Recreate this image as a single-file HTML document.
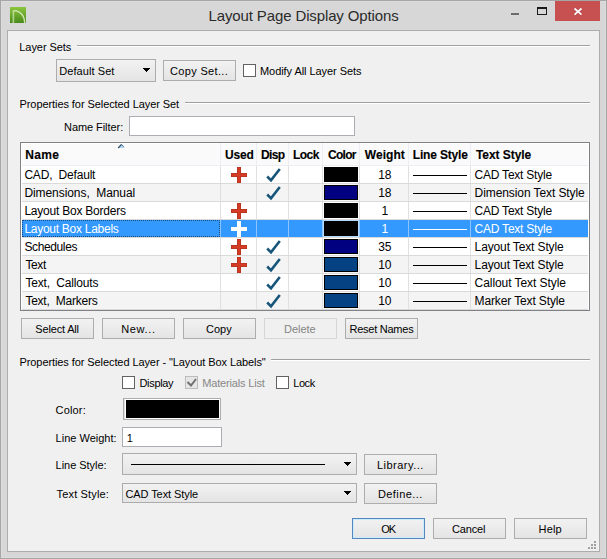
<!DOCTYPE html>
<html><head><meta charset="utf-8"><style>
*{margin:0;padding:0;box-sizing:border-box}
html,body{width:607px;height:559px;overflow:hidden;background:#d7d7d7}
body{position:relative;font-family:"Liberation Sans",sans-serif;font-size:11px;color:#000}
.a{position:absolute}
.t{position:absolute;white-space:pre;line-height:20px;font-size:11px}
.btn{position:absolute;border:1px solid #adadad;background:linear-gradient(#f2f2f2,#e4e4e4);height:21px;width:73px}
.dd{position:absolute;border:1px solid #acacac;background:linear-gradient(#f2f2f2,#e4e4e4)}
.cb{position:absolute;width:13px;height:13px;border:1px solid #626262;background:#fff}
.etch{position:absolute;height:2px;border-top:1px solid #a0a0a0;border-bottom:1px solid #fff}
</style></head><body>
<div class="a" style="left:0;top:0;width:607px;height:559px;border:1px solid #a6a6a6"></div>
<div class="a" style="left:1px;top:1px;width:605px;height:557px;border:1px solid #dcdcdc"></div>
<svg class="a" style="left:10px;top:7px" width="16" height="16" viewBox="0 0 16 16">
<defs><linearGradient id="g" x1="0" y1="0" x2="0" y2="1"><stop offset="0" stop-color="#8cc63e"/><stop offset="1" stop-color="#4a8a1b"/></linearGradient></defs>
<rect width="16" height="16" fill="url(#g)"/>
<path d="M3.4 16V3.8" fill="none" stroke="#d8ecc0" stroke-opacity=".65" stroke-width="1.7"/>
<path d="M3.4 3.6C9.5 3.6 14.6 8 14.7 16" fill="none" stroke="#e4f2cc" stroke-opacity=".85" stroke-width="1.4"/></svg>
<div class="t" style="left:208.50px;top:4px;font-size:15px;line-height:24px;letter-spacing:-0.123px;color:#2b2b2b">Layout Page Display Options</div>
<div class="a" style="left:511px;top:13px;width:8px;height:2px;background:#6b6b6b"></div>
<div class="a" style="left:537px;top:7px;width:10px;height:8px;border:1px solid #1a1a1a;border-top-width:2px"></div>
<div class="a" style="left:555px;top:1px;width:45px;height:20px;background:#c75050"></div>
<svg class="a" style="left:573px;top:7px" width="10" height="9" viewBox="0 0 10 9"><path d="M1.5 1.5L8.5 7.7M8.5 1.5L1.5 7.7" stroke="#7a2020" stroke-opacity=".3" stroke-width="2.8"/><path d="M1.5 1.5L8.5 7.7M8.5 1.5L1.5 7.7" stroke="#fff" stroke-width="1.75"/></svg>
<div class="a" style="left:7px;top:30px;width:593px;height:522px;border:1px solid #adadad;background:#f0f0f0"></div>
<div class="t" style="left:19.30px;top:37px;letter-spacing:-0.067px;">Layer Sets</div>
<div class="etch" style="left:77px;top:45px;width:513px"></div>
<div class="dd" style="left:56px;top:59px;width:100px;height:23px"></div>
<div class="t" style="left:59.30px;top:61px;letter-spacing:0.070px;">Default Set</div>
<svg class="a" style="left:143px;top:68px" width="7" height="4" shape-rendering="crispEdges"><path d="M0 0h7v1h-1v1h-1v1h-1v1h-1v-1h-1v-1h-1v-1h-1z" fill="#000"/></svg>
<div class="btn" style="left:163px;top:60px"></div>
<div class="t" style="left:170.00px;top:61px;letter-spacing:0.330px;">Copy Set...</div>
<div class="cb" style="left:243px;top:64px"></div>
<div class="t" style="left:260.00px;top:61px;letter-spacing:-0.060px;">Modify All Layer Sets</div>
<div class="t" style="left:19.50px;top:94px;letter-spacing:-0.075px;">Properties for Selected Layer Set</div>
<div class="etch" style="left:185px;top:102px;width:405px"></div>
<div class="t" style="left:64.00px;top:117px;letter-spacing:-0.064px;">Name Filter:</div>
<div class="a" style="left:129px;top:116px;width:226px;height:20px;border:1px solid #abadb3;background:#fff"></div>
<div class="a" style="left:20px;top:142px;width:570px;height:169px;border:1px solid #7f8184;background:#fff"></div>
<div class="a" style="left:22px;top:144px;width:566px;height:21px;background:#fafafa"></div>
<div class="a" style="left:22px;top:165px;width:566px;height:1px;background:#eceef4"></div>
<div class="a" style="left:220px;top:143px;width:1px;height:22px;background:#eceef4"></div>
<div class="a" style="left:256px;top:143px;width:1px;height:22px;background:#eceef4"></div>
<div class="a" style="left:288px;top:143px;width:1px;height:22px;background:#eceef4"></div>
<div class="a" style="left:322px;top:143px;width:1px;height:22px;background:#eceef4"></div>
<div class="a" style="left:359px;top:143px;width:1px;height:22px;background:#eceef4"></div>
<div class="a" style="left:408px;top:143px;width:1px;height:22px;background:#eceef4"></div>
<div class="a" style="left:470px;top:143px;width:1px;height:22px;background:#eceef4"></div>
<div class="t" style="left:25.30px;top:145px;font-size:12px;font-weight:bold;-webkit-text-stroke:0.12px #000;letter-spacing:0.333px;">Name</div>
<div class="t" style="left:225.10px;top:145px;font-size:12px;font-weight:bold;-webkit-text-stroke:0.12px #000;letter-spacing:-0.233px;">Used</div>
<div class="t" style="left:261.00px;top:145px;font-size:12px;font-weight:bold;-webkit-text-stroke:0.12px #000;letter-spacing:-0.633px;">Disp</div>
<div class="t" style="left:293.00px;top:145px;font-size:12px;font-weight:bold;-webkit-text-stroke:0.12px #000;letter-spacing:-0.567px;">Lock</div>
<div class="t" style="left:327.90px;top:145px;font-size:12px;font-weight:bold;-webkit-text-stroke:0.12px #000;letter-spacing:-0.675px;">Color</div>
<div class="t" style="left:364.80px;top:145px;font-size:12px;font-weight:bold;-webkit-text-stroke:0.12px #000;letter-spacing:0.060px;">Weight</div>
<div class="t" style="left:412.80px;top:145px;font-size:12px;font-weight:bold;-webkit-text-stroke:0.12px #000;letter-spacing:-0.178px;">Line Style</div>
<div class="t" style="left:475.90px;top:145px;font-size:12px;font-weight:bold;-webkit-text-stroke:0.12px #000;letter-spacing:-0.044px;">Text Style</div>
<svg class="a" style="left:117px;top:143px" width="9" height="6" viewBox="0 0 9 6"><path d="M1.2 5L4.5 1.3L7.8 5Z" fill="#b4d6ee"/><path d="M1.2 5L4.5 1.3" fill="none" stroke="#2c4a64" stroke-width="1.2"/><path d="M4.5 1.3L6.8 4" fill="none" stroke="#5c7c96" stroke-width="1"/></svg>
<div class="a" style="left:22px;top:166px;width:566px;height:17px;background:#ffffff"></div>
<div class="a" style="left:22px;top:183px;width:566px;height:1px;background:#dadada"></div>
<div class="a" style="left:220px;top:166px;width:1px;height:17px;background:#e0e0e0"></div>
<div class="a" style="left:256px;top:166px;width:1px;height:17px;background:#e0e0e0"></div>
<div class="a" style="left:288px;top:166px;width:1px;height:17px;background:#e0e0e0"></div>
<div class="a" style="left:322px;top:166px;width:1px;height:17px;background:#e0e0e0"></div>
<div class="a" style="left:359px;top:166px;width:1px;height:17px;background:#e0e0e0"></div>
<div class="a" style="left:408px;top:166px;width:1px;height:17px;background:#e0e0e0"></div>
<div class="a" style="left:470px;top:166px;width:1px;height:17px;background:#e0e0e0"></div>
<div class="t" style="left:24.40px;top:165px;font-size:12px;letter-spacing:-0.192px;color:#000000">CAD,  Default</div>
<svg class="a" style="left:231px;top:167px" width="16" height="16" shape-rendering="crispEdges"><path d="M6 0h4v6h6v4h-6v6h-4v-6h-6v-4h6z" fill="#d43c26"/><path d="M6.5 0.5h3v6h6v3h-6v6h-3v-6h-6v-3h6z" fill="none" stroke="#a8301c" stroke-opacity=".55" stroke-width="1"/></svg>
<svg class="a" style="left:265px;top:167px" width="17" height="16" viewBox="0 0 17 16"><path d="M2.2 9.5L6 13.3L14.8 2" fill="none" stroke="#18557a" stroke-width="2.6"/></svg>
<div class="a" style="left:324px;top:167px;width:34px;height:15px;background:#000000;border:1px solid #000"></div>
<div class="t" style="left:378.30px;top:165px;font-size:12px;letter-spacing:-0.100px;color:#000000">18</div>
<div class="a" style="left:413px;top:175px;width:54px;height:1px;background:#000000"></div>
<div class="t" style="left:474.60px;top:165px;font-size:12px;letter-spacing:-0.231px;color:#000000">CAD Text Style</div>
<div class="a" style="left:22px;top:184px;width:566px;height:17px;background:#f4f4f4"></div>
<div class="a" style="left:22px;top:201px;width:566px;height:1px;background:#dadada"></div>
<div class="a" style="left:220px;top:184px;width:1px;height:17px;background:#e0e0e0"></div>
<div class="a" style="left:256px;top:184px;width:1px;height:17px;background:#e0e0e0"></div>
<div class="a" style="left:288px;top:184px;width:1px;height:17px;background:#e0e0e0"></div>
<div class="a" style="left:322px;top:184px;width:1px;height:17px;background:#e0e0e0"></div>
<div class="a" style="left:359px;top:184px;width:1px;height:17px;background:#e0e0e0"></div>
<div class="a" style="left:408px;top:184px;width:1px;height:17px;background:#e0e0e0"></div>
<div class="a" style="left:470px;top:184px;width:1px;height:17px;background:#e0e0e0"></div>
<div class="t" style="left:24.40px;top:183px;font-size:12px;letter-spacing:-0.067px;color:#000000">Dimensions,  Manual</div>
<svg class="a" style="left:265px;top:185px" width="17" height="16" viewBox="0 0 17 16"><path d="M2.2 9.5L6 13.3L14.8 2" fill="none" stroke="#18557a" stroke-width="2.6"/></svg>
<div class="a" style="left:324px;top:185px;width:34px;height:15px;background:#000080;border:1px solid #000"></div>
<div class="t" style="left:378.30px;top:183px;font-size:12px;letter-spacing:-0.100px;color:#000000">18</div>
<div class="a" style="left:413px;top:193px;width:54px;height:1px;background:#000000"></div>
<div class="t" style="left:474.60px;top:183px;font-size:12px;letter-spacing:-0.089px;color:#000000">Dimension Text Style</div>
<div class="a" style="left:22px;top:202px;width:566px;height:17px;background:#ffffff"></div>
<div class="a" style="left:22px;top:219px;width:566px;height:1px;background:#dadada"></div>
<div class="a" style="left:220px;top:202px;width:1px;height:17px;background:#e0e0e0"></div>
<div class="a" style="left:256px;top:202px;width:1px;height:17px;background:#e0e0e0"></div>
<div class="a" style="left:288px;top:202px;width:1px;height:17px;background:#e0e0e0"></div>
<div class="a" style="left:322px;top:202px;width:1px;height:17px;background:#e0e0e0"></div>
<div class="a" style="left:359px;top:202px;width:1px;height:17px;background:#e0e0e0"></div>
<div class="a" style="left:408px;top:202px;width:1px;height:17px;background:#e0e0e0"></div>
<div class="a" style="left:470px;top:202px;width:1px;height:17px;background:#e0e0e0"></div>
<div class="t" style="left:24.40px;top:201px;font-size:12px;letter-spacing:-0.224px;color:#000000">Layout Box Borders</div>
<svg class="a" style="left:231px;top:203px" width="16" height="16" shape-rendering="crispEdges"><path d="M6 0h4v6h6v4h-6v6h-4v-6h-6v-4h6z" fill="#d43c26"/><path d="M6.5 0.5h3v6h6v3h-6v6h-3v-6h-6v-3h6z" fill="none" stroke="#a8301c" stroke-opacity=".55" stroke-width="1"/></svg>
<div class="a" style="left:324px;top:203px;width:34px;height:15px;background:#000000;border:1px solid #000"></div>
<div class="t" style="left:381.50px;top:201px;font-size:12px;color:#000000">1</div>
<div class="a" style="left:413px;top:211px;width:54px;height:1px;background:#000000"></div>
<div class="t" style="left:474.60px;top:201px;font-size:12px;letter-spacing:-0.231px;color:#000000">CAD Text Style</div>
<div class="a" style="left:22px;top:220px;width:566px;height:17px;background:#3399ff"></div>
<div class="a" style="left:22px;top:237px;width:566px;height:1px;background:#dadada"></div>
<div class="a" style="left:220px;top:220px;width:1px;height:17px;background:#8cc4ff"></div>
<div class="a" style="left:256px;top:220px;width:1px;height:17px;background:#8cc4ff"></div>
<div class="a" style="left:288px;top:220px;width:1px;height:17px;background:#8cc4ff"></div>
<div class="a" style="left:322px;top:220px;width:1px;height:17px;background:#8cc4ff"></div>
<div class="a" style="left:359px;top:220px;width:1px;height:17px;background:#8cc4ff"></div>
<div class="a" style="left:408px;top:220px;width:1px;height:17px;background:#8cc4ff"></div>
<div class="a" style="left:470px;top:220px;width:1px;height:17px;background:#8cc4ff"></div>
<div class="t" style="left:24.40px;top:219px;font-size:12px;letter-spacing:-0.269px;color:#ffffff">Layout Box Labels</div>
<div class="a" style="left:22px;top:220px;width:198px;height:17px;border:1px dotted rgba(0,0,0,.5)"></div>
<div class="a" style="left:237px;top:221px;width:4px;height:16px;background:#fff"></div>
<div class="a" style="left:231px;top:227px;width:16px;height:4px;background:#fff"></div>
<div class="a" style="left:323px;top:220px;width:36px;height:17px;background:#b4dbff"></div>
<div class="a" style="left:324px;top:221px;width:34px;height:15px;background:#000000;border:1px solid #000"></div>
<div class="t" style="left:381.50px;top:219px;font-size:12px;color:#ffffff">1</div>
<div class="a" style="left:413px;top:229px;width:54px;height:1px;background:#ffffff"></div>
<div class="t" style="left:474.60px;top:219px;font-size:12px;letter-spacing:-0.231px;color:#ffffff">CAD Text Style</div>
<div class="a" style="left:22px;top:238px;width:566px;height:17px;background:#ffffff"></div>
<div class="a" style="left:22px;top:255px;width:566px;height:1px;background:#dadada"></div>
<div class="a" style="left:220px;top:238px;width:1px;height:17px;background:#e0e0e0"></div>
<div class="a" style="left:256px;top:238px;width:1px;height:17px;background:#e0e0e0"></div>
<div class="a" style="left:288px;top:238px;width:1px;height:17px;background:#e0e0e0"></div>
<div class="a" style="left:322px;top:238px;width:1px;height:17px;background:#e0e0e0"></div>
<div class="a" style="left:359px;top:238px;width:1px;height:17px;background:#e0e0e0"></div>
<div class="a" style="left:408px;top:238px;width:1px;height:17px;background:#e0e0e0"></div>
<div class="a" style="left:470px;top:238px;width:1px;height:17px;background:#e0e0e0"></div>
<div class="t" style="left:24.40px;top:237px;font-size:12px;letter-spacing:-0.375px;color:#000000">Schedules</div>
<svg class="a" style="left:231px;top:239px" width="16" height="16" shape-rendering="crispEdges"><path d="M6 0h4v6h6v4h-6v6h-4v-6h-6v-4h6z" fill="#d43c26"/><path d="M6.5 0.5h3v6h6v3h-6v6h-3v-6h-6v-3h6z" fill="none" stroke="#a8301c" stroke-opacity=".55" stroke-width="1"/></svg>
<svg class="a" style="left:265px;top:239px" width="17" height="16" viewBox="0 0 17 16"><path d="M2.2 9.5L6 13.3L14.8 2" fill="none" stroke="#18557a" stroke-width="2.6"/></svg>
<div class="a" style="left:324px;top:239px;width:34px;height:15px;background:#000080;border:1px solid #000"></div>
<div class="t" style="left:378.30px;top:237px;font-size:12px;letter-spacing:-0.100px;color:#000000">35</div>
<div class="a" style="left:413px;top:247px;width:54px;height:1px;background:#000000"></div>
<div class="t" style="left:474.60px;top:237px;font-size:12px;letter-spacing:-0.131px;color:#000000">Layout Text Style</div>
<div class="a" style="left:22px;top:256px;width:566px;height:17px;background:#f4f4f4"></div>
<div class="a" style="left:22px;top:273px;width:566px;height:1px;background:#dadada"></div>
<div class="a" style="left:220px;top:256px;width:1px;height:17px;background:#e0e0e0"></div>
<div class="a" style="left:256px;top:256px;width:1px;height:17px;background:#e0e0e0"></div>
<div class="a" style="left:288px;top:256px;width:1px;height:17px;background:#e0e0e0"></div>
<div class="a" style="left:322px;top:256px;width:1px;height:17px;background:#e0e0e0"></div>
<div class="a" style="left:359px;top:256px;width:1px;height:17px;background:#e0e0e0"></div>
<div class="a" style="left:408px;top:256px;width:1px;height:17px;background:#e0e0e0"></div>
<div class="a" style="left:470px;top:256px;width:1px;height:17px;background:#e0e0e0"></div>
<div class="t" style="left:25.40px;top:255px;font-size:12px;letter-spacing:-0.367px;color:#000000">Text</div>
<svg class="a" style="left:231px;top:257px" width="16" height="16" shape-rendering="crispEdges"><path d="M6 0h4v6h6v4h-6v6h-4v-6h-6v-4h6z" fill="#d43c26"/><path d="M6.5 0.5h3v6h6v3h-6v6h-3v-6h-6v-3h6z" fill="none" stroke="#a8301c" stroke-opacity=".55" stroke-width="1"/></svg>
<svg class="a" style="left:265px;top:257px" width="17" height="16" viewBox="0 0 17 16"><path d="M2.2 9.5L6 13.3L14.8 2" fill="none" stroke="#18557a" stroke-width="2.6"/></svg>
<div class="a" style="left:324px;top:257px;width:34px;height:15px;background:#044283;border:1px solid #000"></div>
<div class="t" style="left:378.30px;top:255px;font-size:12px;letter-spacing:-0.100px;color:#000000">10</div>
<div class="a" style="left:413px;top:265px;width:54px;height:1px;background:#000000"></div>
<div class="t" style="left:474.60px;top:255px;font-size:12px;letter-spacing:-0.131px;color:#000000">Layout Text Style</div>
<div class="a" style="left:22px;top:274px;width:566px;height:17px;background:#ffffff"></div>
<div class="a" style="left:22px;top:291px;width:566px;height:1px;background:#dadada"></div>
<div class="a" style="left:220px;top:274px;width:1px;height:17px;background:#e0e0e0"></div>
<div class="a" style="left:256px;top:274px;width:1px;height:17px;background:#e0e0e0"></div>
<div class="a" style="left:288px;top:274px;width:1px;height:17px;background:#e0e0e0"></div>
<div class="a" style="left:322px;top:274px;width:1px;height:17px;background:#e0e0e0"></div>
<div class="a" style="left:359px;top:274px;width:1px;height:17px;background:#e0e0e0"></div>
<div class="a" style="left:408px;top:274px;width:1px;height:17px;background:#e0e0e0"></div>
<div class="a" style="left:470px;top:274px;width:1px;height:17px;background:#e0e0e0"></div>
<div class="t" style="left:25.40px;top:273px;font-size:12px;letter-spacing:-0.164px;color:#000000">Text,  Callouts</div>
<svg class="a" style="left:265px;top:275px" width="17" height="16" viewBox="0 0 17 16"><path d="M2.2 9.5L6 13.3L14.8 2" fill="none" stroke="#18557a" stroke-width="2.6"/></svg>
<div class="a" style="left:324px;top:275px;width:34px;height:15px;background:#044283;border:1px solid #000"></div>
<div class="t" style="left:378.30px;top:273px;font-size:12px;letter-spacing:-0.100px;color:#000000">10</div>
<div class="a" style="left:413px;top:283px;width:54px;height:1px;background:#000000"></div>
<div class="t" style="left:474.60px;top:273px;font-size:12px;letter-spacing:-0.065px;color:#000000">Callout Text Style</div>
<div class="a" style="left:22px;top:292px;width:566px;height:17px;background:#f4f4f4"></div>
<div class="a" style="left:22px;top:309px;width:566px;height:1px;background:#dadada"></div>
<div class="a" style="left:220px;top:292px;width:1px;height:17px;background:#e0e0e0"></div>
<div class="a" style="left:256px;top:292px;width:1px;height:17px;background:#e0e0e0"></div>
<div class="a" style="left:288px;top:292px;width:1px;height:17px;background:#e0e0e0"></div>
<div class="a" style="left:322px;top:292px;width:1px;height:17px;background:#e0e0e0"></div>
<div class="a" style="left:359px;top:292px;width:1px;height:17px;background:#e0e0e0"></div>
<div class="a" style="left:408px;top:292px;width:1px;height:17px;background:#e0e0e0"></div>
<div class="a" style="left:470px;top:292px;width:1px;height:17px;background:#e0e0e0"></div>
<div class="t" style="left:25.40px;top:291px;font-size:12px;letter-spacing:-0.238px;color:#000000">Text,  Markers</div>
<svg class="a" style="left:265px;top:293px" width="17" height="16" viewBox="0 0 17 16"><path d="M2.2 9.5L6 13.3L14.8 2" fill="none" stroke="#18557a" stroke-width="2.6"/></svg>
<div class="a" style="left:324px;top:293px;width:34px;height:15px;background:#044283;border:1px solid #000"></div>
<div class="t" style="left:378.30px;top:291px;font-size:12px;letter-spacing:-0.100px;color:#000000">10</div>
<div class="a" style="left:413px;top:301px;width:54px;height:1px;background:#000000"></div>
<div class="t" style="left:474.60px;top:291px;font-size:12px;letter-spacing:-0.131px;color:#000000">Marker Text Style</div>
<div class="btn" style="left:21px;top:318px"></div>
<div class="t" style="left:35.30px;top:319px;letter-spacing:-0.167px;">Select All</div>
<div class="btn" style="left:102px;top:318px"></div>
<div class="t" style="left:121.20px;top:319px;letter-spacing:0.640px;">New...</div>
<div class="btn" style="left:183px;top:318px"></div>
<div class="t" style="left:206.10px;top:319px;letter-spacing:-0.033px;">Copy</div>
<div class="btn" style="left:264px;top:318px;border-color:#d6d6d6;background:#f0f0f0"></div>
<div class="t" style="left:284.00px;top:319px;letter-spacing:-0.040px;color:#858585">Delete</div>
<div class="btn" style="left:345px;top:318px"></div>
<div class="t" style="left:349.50px;top:319px;letter-spacing:-0.250px;">Reset Names</div>
<div class="t" style="left:19.50px;top:352px;letter-spacing:-0.086px;">Properties for Selected Layer - "Layout Box Labels"</div>
<div class="etch" style="left:271px;top:359px;width:319px"></div>
<div class="cb" style="left:122px;top:376px"></div>
<div class="t" style="left:139.50px;top:373px;letter-spacing:-0.333px;">Display</div>
<div class="cb" style="left:185px;top:376px;border-color:#bcbcbc;background:#e6e6e6"></div>
<svg class="a" style="left:185px;top:376px" width="13" height="13" viewBox="0 0 13 13"><path d="M2.5 6L6 9.5L11 3" fill="none" stroke="#707070" stroke-width="2"/></svg>
<div class="t" style="left:202.20px;top:373px;letter-spacing:-0.162px;color:#878787">Materials List</div>
<div class="cb" style="left:276px;top:376px"></div>
<div class="t" style="left:293.20px;top:373px;letter-spacing:-0.400px;">Lock</div>
<div class="t" style="left:55.60px;top:400px;letter-spacing:0.160px;">Color:</div>
<div class="a" style="left:123px;top:398px;width:98px;height:22px;border:1px solid #adadad;background:#fff;box-shadow:inset 1px 0 0 #e2e2e2"></div>
<div class="a" style="left:126px;top:400px;width:93px;height:18px;background:#000"></div>
<div class="t" style="left:55.60px;top:428px;">Line Weight:</div>
<div class="a" style="left:122px;top:427px;width:100px;height:20px;border:1px solid #abadb3;background:#fff"></div>
<div class="t" style="left:126.70px;top:428px;">1</div>
<div class="t" style="left:55.60px;top:455px;letter-spacing:-0.040px;">Line Style:</div>
<div class="dd" style="left:122px;top:453px;width:235px;height:22px"></div>
<div class="a" style="left:131px;top:464px;width:194px;height:1px;background:#000"></div>
<svg class="a" style="left:344px;top:462px" width="7" height="4" shape-rendering="crispEdges"><path d="M0 0h7v1h-1v1h-1v1h-1v1h-1v-1h-1v-1h-1v-1h-1z" fill="#000"/></svg>
<div class="btn" style="left:364px;top:454px"></div>
<div class="t" style="left:377.00px;top:455px;letter-spacing:0.478px;">Library...</div>
<div class="t" style="left:56.60px;top:484px;letter-spacing:0.150px;">Text Style:</div>
<div class="dd" style="left:122px;top:483px;width:235px;height:20px"></div>
<div class="t" style="left:125.40px;top:484px;letter-spacing:-0.077px;">CAD Text Style</div>
<svg class="a" style="left:344px;top:491px" width="7" height="4" shape-rendering="crispEdges"><path d="M0 0h7v1h-1v1h-1v1h-1v1h-1v-1h-1v-1h-1v-1h-1z" fill="#000"/></svg>
<div class="btn" style="left:364px;top:483px"></div>
<div class="t" style="left:377.90px;top:484px;letter-spacing:0.425px;">Define...</div>
<div class="btn" style="left:352px;top:518px;border-color:#5686bb;box-shadow:inset 0 0 0 1px #c9ecff"></div>
<div class="t" style="left:381.20px;top:519px;letter-spacing:-0.900px;">OK</div>
<div class="btn" style="left:433px;top:518px"></div>
<div class="t" style="left:452.10px;top:519px;letter-spacing:-0.200px;">Cancel</div>
<div class="btn" style="left:514px;top:518px"></div>
<div class="t" style="left:538.60px;top:519px;letter-spacing:0.133px;">Help</div>
<div class="a" style="left:594px;top:541px;width:2px;height:2px;background:#a0a0a0"></div>
<div class="a" style="left:591px;top:544px;width:2px;height:2px;background:#a0a0a0"></div>
<div class="a" style="left:594px;top:544px;width:2px;height:2px;background:#a0a0a0"></div>
<div class="a" style="left:588px;top:547px;width:2px;height:2px;background:#a0a0a0"></div>
<div class="a" style="left:591px;top:547px;width:2px;height:2px;background:#a0a0a0"></div>
<div class="a" style="left:594px;top:547px;width:2px;height:2px;background:#a0a0a0"></div>
</body></html>
